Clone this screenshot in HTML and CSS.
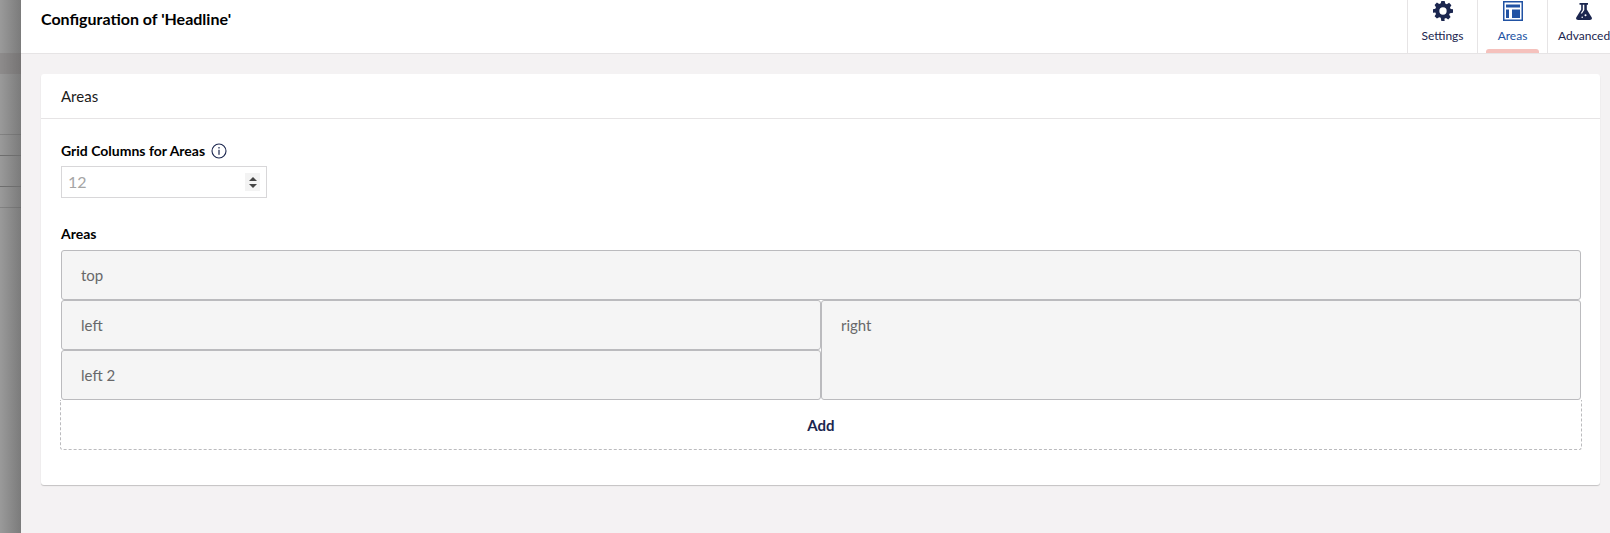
FILE: index.html
```html
<!DOCTYPE html>
<html lang="en">
<head>
<meta charset="utf-8">
<title>Configuration of 'Headline'</title>
<link rel="stylesheet" href="styles.css">
</head>
<body>
<div class="shell">
  <div class="backdrop">
    <div class="bd-row bd-dark"></div>
    <div class="bd-row bd-a"></div>
    <div class="bd-row bd-b"></div>
    <div class="bd-row bd-c"></div>
    <div class="bd-row bd-d"></div>
  </div>
  <main class="panel">
    <header class="topbar">
      <h1 class="title">Configuration of 'Headline'</h1>
      <nav class="tabs">
        <a class="tab">
          <svg class="tab-icon" viewBox="0 0 24 24"><path fill="#1b264f" fill-rule="evenodd" d="M10 0h4l.7 3.100 1.900.8 2.700-1.700 2.800 2.800-1.700 2.700.8 1.900L24 10v4l-3.800.7-.8 1.900 1.700 2.700-2.800 2.800-2.700-1.700-1.900.8L14 24h-4l-.7-3.800-1.900-.8-2.700 1.700-2.800-2.800 1.700-2.700-.8-1.900L0 14v-4l2.800-.7.8-1.900-1.700-2.700 2.800-2.800 2.700 1.700 1.900-.8zM12 7.600a4.400 4.400 0 1 0 0 8.800a4.400 4.400 0 0 0 0-8.800z"/></svg>
          <span>Settings</span>
        </a>
        <a class="tab tab-active">
          <svg class="tab-icon" viewBox="0 0 20 20"><path fill="#2152a3" fill-rule="evenodd" d="M0 0h20v20H0zM1.500 1.500v17h17v-17zM3 3.500h14v3H3zM3 8.500h3V17H3zM9 8.500h8V17H9z"/></svg>
          <span>Areas</span>
          <i class="tab-marker"></i>
        </a>
        <a class="tab tab-last">
          <svg class="tab-icon flask" viewBox="0 0 16 17"><path fill="#1b264f" fill-rule="evenodd" d="M3.500 0h8.500v1.800h-1.200v4.700l4.800 7.700c.9 1.500-.1 2.800-1.700 2.800H2.100C.5 17-.5 15.700.4 14.200l4.800-7.700V1.800H3.500zM6.800 1.800v5.200L4.700 10.400h1.300L8.300 7V1.800zM9.500 11.300a1 1 0 1 0 0 2a1 1 0 0 0 0-2zM6.200 13.400a.8.8 0 1 0 0 1.600a.8.8 0 0 0 0-1.600z"/></svg>
          <span>Advanced</span>
        </a>
      </nav>
    </header>
    <section class="content">
      <div class="card">
        <div class="card-head">Areas</div>
        <div class="card-body">
          <div class="field-label">
            <span>Grid Columns for Areas</span>
            <svg class="info" viewBox="0 0 16 16"><circle cx="8" cy="8" r="7" fill="none" stroke="#1b264f" stroke-width="1.100"/><rect x="7.400" y="6.800" width="1.200" height="5" fill="#1b264f"/><rect x="7.400" y="4" width="1.200" height="1.500" fill="#1b264f"/></svg>
          </div>
          <div class="number-input">
            <span class="number-value">12</span>
            <span class="spinner"><i class="up"></i><i class="down"></i></span>
          </div>
          <div class="areas-label">Areas</div>
          <div class="areas-grid">
            <div class="area area-top">top</div>
            <div class="area area-left">left</div>
            <div class="area area-right">right</div>
            <div class="area area-left2">left 2</div>
            <button class="add-btn">Add</button>
          </div>
        </div>
      </div>
    </section>
  </main>
</div>
</body>
</html>
```
FILE: styles.css
```css
* { box-sizing: border-box; }
html, body { margin: 0; height: 100%; }
body {
  font-family: Lato, "Open Sans", sans-serif;
  color: #1b264f;
  overflow: hidden;
}
.shell { display: flex; height: 533px; }

.backdrop {
  width: 21px;
  flex: none;
  background: linear-gradient(to right, #9a9a9a, #7b7b7b);
  padding-top: 53px;
}
.bd-row { border-bottom: 1px solid #8a8a8a; }
.bd-dark { height: 21px; background: rgba(100, 90, 90, .22); border: 0; }
.bd-a { height: 61px; border-bottom-color: rgba(90, 90, 90, .35); }
.bd-b { height: 21px; border-bottom-color: #6e6e6e; }
.bd-c { height: 31px; border-bottom-color: #6e6e6e; }
.bd-d { height: 21px; border-bottom-color: rgba(90, 90, 90, .35); }

.panel {
  flex: 1;
  min-width: 0;
  background: #f4f2f3;
  display: flex;
  flex-direction: column;
}

.topbar {
  height: 54px;
  flex: none;
  background: #fff;
  border-bottom: 1px solid #e6e4e5;
  display: flex;
  justify-content: space-between;
  padding-left: 20px;
}
.title {
  margin: 9px 0 0;
  font-size: 16px;
  line-height: 20px;
  font-weight: 700;
  color: #000;
}
.tabs { display: flex; }
.tab {
  width: 70px;
  border-left: 1px solid #e6e4e5;
  display: flex;
  flex-direction: column;
  align-items: center;
  padding-top: 1px;
  font-size: 12px;
  line-height: 16px;
  color: #1b264f;
  position: relative;
  white-space: nowrap;
}
.tab-last { width: 63px; align-items: flex-start; padding-left: 10px; }
.tab-icon { width: 20px; height: 20px; display: block; margin-bottom: 7px; flex: none; }
.tab-last .flask { width: 16px; height: 17px; margin: 2px 0 8px 18px; }
.tab-active { color: #2152a3; }
.tab-marker {
  position: absolute;
  left: 8px;
  right: 8px;
  bottom: 0;
  height: 4px;
  background: #f5c1bc;
  border-radius: 3px 3px 0 0;
}

.content { padding: 20px 10px 0 20px; }
.card {
  background: #fff;
  border-radius: 3px;
  box-shadow: 0 1px 1px rgba(0, 0, 0, .2);
  height: 411px;
}
.card-head {
  height: 45px;
  border-bottom: 1px solid #e6e4e5;
  padding: 0 20px;
  font-size: 15px;
  line-height: 45px;
  color: #1b1b1b;
}
.card-body { padding: 21px 20px 20px; }
.field-label {
  display: flex;
  align-items: center;
  gap: 6px;
  font-size: 14px;
  font-weight: 700;
  line-height: 22px;
  color: #000;
}
.info { width: 16px; height: 16px; }
.number-input {
  width: 206px;
  height: 32px;
  margin-top: 4px;
  border: 1px solid #d8d7d9;
  display: flex;
  align-items: center;
  justify-content: space-between;
  padding: 0 6px;
}
.number-value { font-size: 16px; color: #a5a5a5; padding-bottom: 2px; }
.spinner {
  width: 15px;
  height: 18px;
  background: #f3f3f3;
  display: flex;
  flex-direction: column;
  align-items: center;
  justify-content: center;
  gap: 3px;
}
.spinner i { width: 0; height: 0; border: 4px solid transparent; border-top: 0; border-bottom: 4px solid #444; }
.spinner .down { border-bottom: 0; border-top: 4px solid #444; }

.areas-label {
  margin-top: 25px;
  font-size: 14px;
  font-weight: 700;
  line-height: 22px;
  color: #000;
}
.areas-grid {
  margin-top: 5px;
  display: grid;
  grid-template-columns: 1fr 1fr;
  grid-template-rows: 50px 50px 50px 50px;
  width: 1520px;
}
.area {
  background: #f5f5f5;
  border: 1px solid #bbbbbe;
  border-radius: 3px;
  padding: 15px 19px 0;
  font-size: 15px;
  line-height: 18px;
  color: #68686a;
}
.area-top { grid-column: 1 / 3; }
.area-left { grid-column: 1; grid-row: 2; }
.area-right { grid-column: 2; grid-row: 2 / 4; }
.area-left2 { grid-column: 1; grid-row: 3; }
.add-btn {
  grid-column: 1 / 3;
  grid-row: 4;
  margin: 0 -1px;
  background: #fff;
  border: 1px dashed #bbbbbe;
  border-top: 0;
  border-radius: 0 0 3px 3px;
  font-family: inherit;
  font-size: 15px;
  font-weight: 700;
  color: #1b264f;
}
```
